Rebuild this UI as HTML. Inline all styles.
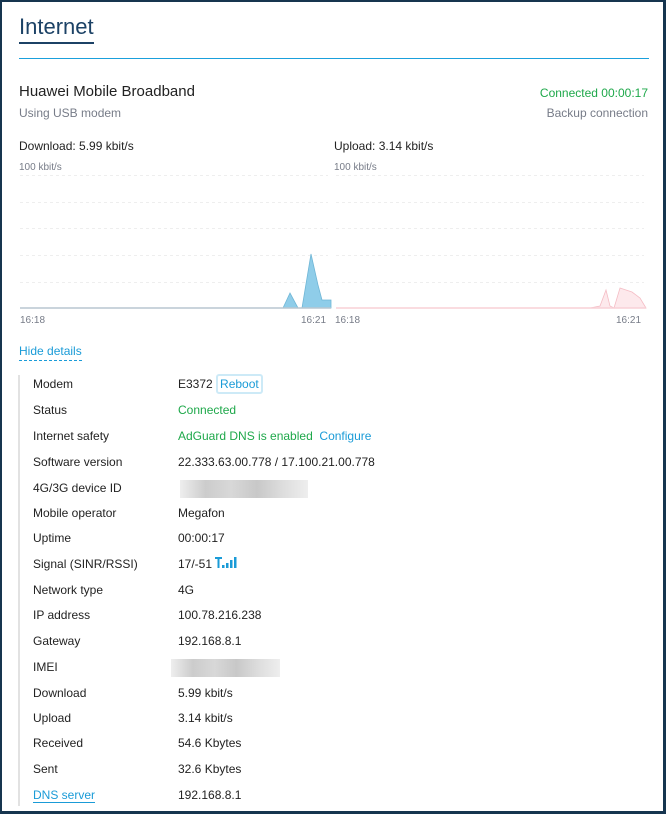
<!DOCTYPE html>
<html><head><meta charset="utf-8"><style>
*{margin:0;padding:0;box-sizing:border-box}
html,body{width:666px;height:814px;overflow:hidden;background:#16354f}
body{font-family:"Liberation Sans",sans-serif;font-size:12px;color:#222}
.frame{position:absolute;left:2px;top:2px;width:661px;height:809px;background:#fff}
.abs{position:absolute;white-space:nowrap}
h1{position:absolute;left:19px;top:15px;font-weight:normal;font-size:22px;color:#1c4266;border-bottom:2px solid #1c4266;padding-bottom:3px;line-height:24px}
.hr{position:absolute;left:19px;top:58px;width:630px;height:1px;background:#1aa0dc}
.g{color:#1ea84a}.b{color:#1a9bd7}.m{color:#777c88}
.row{position:absolute;left:33px;height:20px;line-height:20px}
.row span{position:absolute;left:145px;white-space:nowrap}
.blur{display:inline-block;height:18px;vertical-align:middle;background:linear-gradient(90deg,#eee,#ccc,#d8d8d8,#c8c8c8,#ddd,#eee)}
</style></head><body><div class="frame"></div>
<h1>Internet</h1><div class="hr"></div>
<div class="abs" style="left:19px;top:83px;font-size:15px;color:#222">Huawei Mobile Broadband</div>
<div class="abs m" style="left:19px;top:106px;font-size:12px">Using USB modem</div>
<div class="abs g" style="right:18px;top:86px">Connected 00:00:17</div>
<div class="abs m" style="right:18px;top:106px">Backup connection</div>
<div class="abs" style="left:19px;top:139px">Download: 5.99 kbit/s</div>
<div class="abs" style="left:334px;top:139px">Upload: 3.14 kbit/s</div>
<div class="abs m" style="left:19px;top:162px;font-size:10px">100 kbit/s</div>
<div class="abs m" style="left:334px;top:162px;font-size:10px">100 kbit/s</div>
<svg class="abs" style="left:0;top:0" width="666" height="330">
<g stroke="#eeeeee" stroke-dasharray="3,3" stroke-width="1">
<line x1="20" y1="175.5" x2="328" y2="175.5"/><line x1="20" y1="202.5" x2="328" y2="202.5"/><line x1="20" y1="228.5" x2="328" y2="228.5"/><line x1="20" y1="255.5" x2="328" y2="255.5"/><line x1="20" y1="282.5" x2="328" y2="282.5"/>
<line x1="336" y1="175.5" x2="644" y2="175.5"/><line x1="336" y1="202.5" x2="644" y2="202.5"/><line x1="336" y1="228.5" x2="644" y2="228.5"/><line x1="336" y1="255.5" x2="644" y2="255.5"/><line x1="336" y1="282.5" x2="644" y2="282.5"/>
</g>
<path d="M20 308 L283 308 L290 293 L298 308 L302 308 L311 254 L318 285 L322 300 L328 300 L331 300 L331 308 Z" fill="#8fcde9" stroke="#6fb6d6" stroke-width="0.8"/>
<line x1="20" y1="308" x2="331" y2="308" stroke="#b9c6d0" stroke-width="1.5"/>
<path d="M336 308 L590 308 L600 306 L606 290 L610 306 L614 308 L620 288 L632 292 L640 298 L646 308 Z" fill="#fde9ec" stroke="#f4bcc4" stroke-width="0.8"/>
<line x1="336" y1="308" x2="646" y2="308" stroke="#f8d0d6" stroke-width="1.5"/>
<g fill="#777c88" font-size="10" font-family="Liberation Sans"><text x="20" y="323">16:18</text><text x="301" y="323">16:21</text><text x="335" y="323">16:18</text><text x="616" y="323">16:21</text></g>
</svg>
<div class="abs b" style="left:19px;top:344px;border-bottom:1px dashed #1a9bd7;padding-bottom:2px">Hide details</div>
<div class="abs" style="left:18px;top:375px;width:2px;height:431px;background:#e2e2e2"></div>
<div class="row" style="top:374px">Modem<span>E3372 <b class="b" style="font-weight:normal;border:2px solid #cdeaf7;border-radius:3px;padding:1px 2px">Reboot</b></span></div>
<div class="row" style="top:400px">Status<span class="g">Connected</span></div>
<div class="row" style="top:426px">Internet safety<span><i class="g" style="font-style:normal">AdGuard DNS is enabled</i> &nbsp;<i class="b" style="font-style:normal">Configure</i></span></div>
<div class="row" style="top:452px">Software version<span>22.333.63.00.778 / 17.100.21.00.778</span></div>
<div class="row" style="top:478px">4G/3G device ID<span><i class="blur" style="width:128px;margin-left:2px"></i></span></div>
<div class="row" style="top:503px">Mobile operator<span>Megafon</span></div>
<div class="row" style="top:528px">Uptime<span>00:00:17</span></div>
<div class="row" style="top:554px">Signal (SINR/RSSI)<span>17/-51 <svg width="22" height="12" style="vertical-align:-1px"><g fill="#1a9bd7"><rect x="0" y="0" width="7" height="2"/><rect x="2.5" y="0" width="2" height="11"/><rect x="7" y="8" width="2.5" height="3"/><rect x="11" y="6" width="2.5" height="5"/><rect x="15" y="3" width="2.5" height="8"/><rect x="19" y="0" width="2.5" height="11"/></g></svg></span></div>
<div class="row" style="top:580px">Network type<span>4G</span></div>
<div class="row" style="top:605px">IP address<span>100.78.216.238</span></div>
<div class="row" style="top:631px">Gateway<span>192.168.8.1</span></div>
<div class="row" style="top:657px">IMEI<span><i class="blur" style="width:109px;margin-left:-7px"></i></span></div>
<div class="row" style="top:683px">Download<span>5.99 kbit/s</span></div>
<div class="row" style="top:708px">Upload<span>3.14 kbit/s</span></div>
<div class="row" style="top:733px">Received<span>54.6 Kbytes</span></div>
<div class="row" style="top:759px">Sent<span>32.6 Kbytes</span></div>
<div class="row" style="top:785px"><b class="b" style="font-weight:normal;border-bottom:1px solid #1a9bd7">DNS server</b><span>192.168.8.1</span></div>
</body></html>
